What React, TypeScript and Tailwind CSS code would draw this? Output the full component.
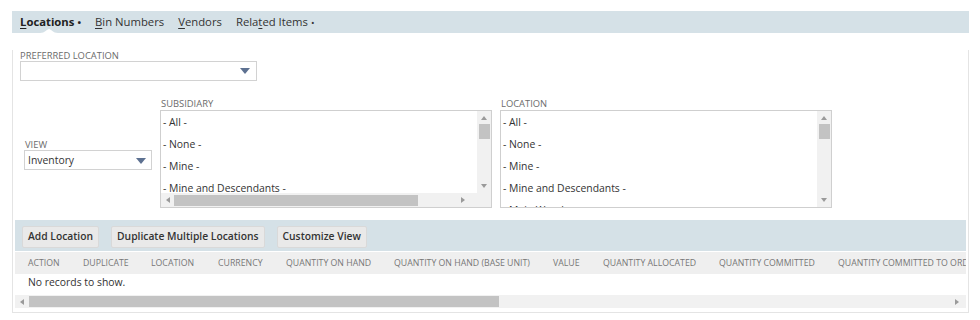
const columns = [
  { label: "ACTION", w: "w-[55px]" },
  { label: "DUPLICATE", w: "w-[68px]" },
  { label: "LOCATION", w: "w-[67px]" },
  { label: "CURRENCY", w: "w-[68px]" },
  { label: "QUANTITY ON HAND", w: "w-[108px]" },
  { label: "QUANTITY ON HAND (BASE UNIT)", w: "w-[159px]" },
  { label: "VALUE", w: "w-[50px]" },
  { label: "QUANTITY ALLOCATED", w: "w-[116px]" },
  { label: "QUANTITY COMMITTED", w: "w-[119px]" },
  { label: "QUANTITY COMMITTED TO ORDER", w: "w-[160px]" },
];

const options = ["- All -", "- None -", "- Mine -", "- Mine and Descendants -"];

function Caret() {
  return (
    <svg width="10" height="6" viewBox="0 0 10 6" className="shrink-0">
      <path d="M0 0h10L5 6z" fill="#5d7191" />
    </svg>
  );
}

function Arrow({ dir }: { dir: "up" | "down" | "left" | "right" }) {
  const d = {
    up: "M0 4h6L3 0z",
    down: "M0 0h6L3 4z",
    left: "M4 0v6L0 3z",
    right: "M0 0v6l4-3z",
  }[dir];
  const vertical = dir === "up" || dir === "down";
  return (
    <svg width={vertical ? 6 : 4} height={vertical ? 4 : 6} viewBox={vertical ? "0 0 6 4" : "0 0 4 6"}>
      <path d={d} fill="#9a9a9a" />
    </svg>
  );
}

function VScroll() {
  return (
    <div className="flex w-[14px] flex-col items-center bg-[#f1f1f1] pt-[5px]">
      <Arrow dir="up" />
      <div className="mt-[4px] h-[15px] w-[11px] bg-[#c3c3c3]" />
      <div className="flex-1" />
      <div className="pb-[5px]">
        <Arrow dir="down" />
      </div>
    </div>
  );
}

function ListBox({ label, hscroll, extra }: { label: string; hscroll?: boolean; extra?: string }) {
  const items = extra ? [...options, extra] : options;
  return (
    <div className="flex flex-col">
      <div className="h-[11px] pl-[1px] text-[9.4px] leading-[11px] text-[#6b6b6b]">{label}</div>
      <div className="mt-[1px] flex h-[98px] w-[332px] flex-col border border-[#cfcfcf] bg-white">
        <div className="flex min-h-0 flex-1">
          <div className="flex-1 overflow-hidden pl-[2px] pt-[1px] text-[10.4px]">
            {items.map((o) => (
              <div key={o} className="h-[22px] whitespace-nowrap leading-[21px]">
                {o}
              </div>
            ))}
          </div>
          <VScroll />
        </div>
        {hscroll && (
          <div className="flex h-[14px] items-center bg-[#f1f1f1]">
            <div className="flex w-[13px] justify-center">
              <Arrow dir="left" />
            </div>
            <div className="h-[11px] w-[244px] bg-[#c3c3c3]" />
            <div className="flex-1" />
            <div className="flex w-[24px] justify-start pl-[8px]">
              <Arrow dir="right" />
            </div>
            <div className="w-[14px]" />
          </div>
        )}
      </div>
    </div>
  );
}

function Tab({ pre, u, post, bold, dot }: { pre: string; u: string; post: string; bold?: boolean; dot?: boolean }) {
  return (
    <div className={`whitespace-nowrap text-[11.3px] ${bold ? "font-bold text-[#222]" : "text-[#333]"}`}>
      {pre}
      <span className="underline underline-offset-2">{u}</span>
      {post}
      {dot && <span className="ml-[3px] text-[9.5px]">•</span>}
    </div>
  );
}

export default function App() {
  return (
    <div className="h-[320px] w-[980px] bg-white pl-[12px] pt-[11px] font-['Open_Sans',sans-serif] text-[#333]">
      <div className="w-[957px]">
        <div className="relative flex h-[22px] items-center gap-[14px] bg-[#d5e1e7] pl-[8px]">
          <Tab pre="" u="L" post="ocations" bold dot />
          <Tab pre="" u="B" post="in Numbers" />
          <Tab pre="" u="V" post="endors" />
          <Tab pre="Rela" u="t" post="ed Items" dot />
          <svg width="18" height="4" viewBox="0 0 18 4" className="absolute bottom-0 left-[28px]">
            <path d="M0 4C5 4 7 0 9 0s4 4 9 4z" fill="#fff" />
          </svg>
        </div>

        <div className="border-x border-b border-[#e4e4e4] pb-[4px]">
          <div className="pl-[7px]">
            <div className="mt-[17px] h-[11px] text-[9.4px] leading-[11px] text-[#6b6b6b]">PREFERRED LOCATION</div>
            <div className="flex h-[20px] w-[237px] items-center justify-end border border-[#d2d2d2] pr-[6px]">
              <Caret />
            </div>

            <div className="mt-[17px] flex">
              <div className="ml-[4px] mt-[41px] flex flex-col">
                <div className="h-[11px] pl-[1px] text-[9.4px] leading-[11px] text-[#6b6b6b]">VIEW</div>
                <div className="flex h-[20px] w-[128px] items-center justify-between border border-[#d2d2d2] pl-[3px] pr-[5px] pt-[1px] text-[10.4px]">
                  <span>Inventory</span>
                  <Caret />
                </div>
              </div>
              <div className="ml-[8px]">
                <ListBox label="SUBSIDIARY" hscroll />
              </div>
              <div className="ml-[8px]">
                <ListBox label="LOCATION" extra="- Main Warehouse -" />
              </div>
            </div>
          </div>

          <div className="mx-[2px] mt-[12px]">
            <div className="flex h-[31px] items-start gap-[12px] bg-[#d5e1e7] pl-[7px] pt-[6px]">
              {["Add Location", "Duplicate Multiple Locations", "Customize View"].map((b) => (
                <div
                  key={b}
                  className="flex h-[22px] items-center whitespace-nowrap rounded-[2px] border border-[#d9d9d9] bg-[#e9e9e9] px-[5px] text-[10.3px] font-semibold text-[#333]"
                >
                  {b}
                </div>
              ))}
            </div>
            <div className="mt-[1px] flex h-[22px] items-center overflow-hidden bg-[#efefef] pl-[13px] pt-[1px] text-[8.75px] text-[#777]">
              {columns.map((c) => (
                <div key={c.label} className={`${c.w} shrink-0 whitespace-nowrap`}>
                  {c.label}
                </div>
              ))}
            </div>
            <div className="flex h-[18px] items-center pl-[13px] text-[10.4px]">No records to show.</div>
            <div className="mt-[3px] flex h-[13px] items-center bg-[#f1f1f1]">
              <div className="flex w-[14px] justify-center">
                <Arrow dir="left" />
              </div>
              <div className="h-[11px] w-[470px] bg-[#c3c3c3]" />
              <div className="flex-1" />
              <div className="flex w-[18px] justify-center">
                <Arrow dir="right" />
              </div>
            </div>
          </div>
        </div>
      </div>
    </div>
  );
}
